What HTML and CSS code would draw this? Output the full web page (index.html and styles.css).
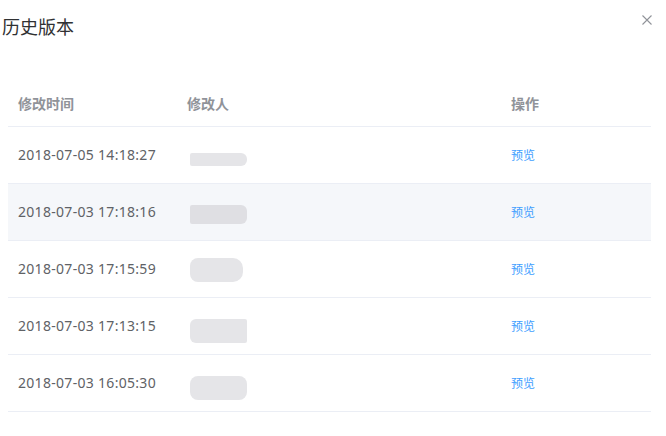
FILE: index.html
```html
<!DOCTYPE html>
<html lang="zh">
<head>
<meta charset="utf-8">
<link rel="stylesheet" href="styles.css">
</head>
<body>
<div class="dialog">
  <div class="dialog-header">
    <span class="title">历史版本</span>
    <span class="close" aria-label="关闭">
      <svg width="10" height="10" viewBox="0 0 10 10"><path d="M0.5 0.5 L9.5 9.5 M9.5 0.5 L0.5 9.5" stroke="#909399" stroke-width="1.1" fill="none"/></svg>
    </span>
  </div>
  <table class="table">
    <colgroup><col class="c1"><col class="c2"><col class="c3"></colgroup>
    <thead>
      <tr><th>修改时间</th><th>修改人</th><th>操作</th></tr>
    </thead>
    <tbody>
      <tr><td class="time">2018-07-05 14:18:27</td><td><span class="blur b1"></span></td><td><a class="link">预览</a></td></tr>
      <tr class="hover"><td class="time">2018-07-03 17:18:16</td><td><span class="blur b2"></span></td><td><a class="link">预览</a></td></tr>
      <tr><td class="time">2018-07-03 17:15:59</td><td><span class="blur b3"></span></td><td><a class="link">预览</a></td></tr>
      <tr><td class="time">2018-07-03 17:13:15</td><td><span class="blur b4"></span></td><td><a class="link">预览</a></td></tr>
      <tr><td class="time">2018-07-03 16:05:30</td><td><span class="blur b5"></span></td><td><a class="link">预览</a></td></tr>
    </tbody>
  </table>
</div>
</body>
</html>
```
FILE: styles.css
```css
html, body {
  margin: 0;
  padding: 0;
  background: #fff;
}
body {
  font-family: "Noto Sans", "Noto Sans CJK SC", sans-serif;
  color: #606266;
}
.dialog {
  width: 666px;
  padding-top: 14px;
}
.dialog-header {
  display: flex;
  justify-content: space-between;
  align-items: flex-start;
  padding-left: 2px;
  padding-right: 14px;
  height: 66px;
}
.title {
  font-family: "Noto Sans CJK SC", sans-serif;
  font-size: 18px;
  line-height: 24px;
  color: #303133;
}
.close {
  display: block;
  width: 10px;
  height: 10px;
  margin-top: 1px;
}
.close svg { display: block; }
.table {
  margin-left: 8px;
  width: 643px;
  border-collapse: collapse;
  table-layout: fixed;
}
.c1 { width: 169px; }
.c2 { width: 324px; }
.c3 { width: 150px; }
th {
  font-family: "Noto Sans CJK SC", sans-serif;
  font-size: 14px;
  font-weight: bold;
  color: #909399;
  text-align: left;
  height: 46px;
  padding: 0 10px;
  border-bottom: 1px solid #ebeef5;
  vertical-align: middle;
}
td {
  height: 54px;
  padding: 0 10px 2px;
  border-bottom: 1px solid #ebeef5;
  vertical-align: middle;
  font-size: 14px;
}
tr.hover td { background: #f5f7fa; }
.time {
  color: #606266;
  font-size: 14px;
  letter-spacing: 0.3px;
}
.link {
  font-family: "Noto Sans CJK SC", sans-serif;
  font-size: 12px;
  color: #409eff;
  cursor: pointer;
}
.blur {
  display: block;
  width: 57px;
  margin-left: 3px;
  background: #e5e5e8;
  border-radius: 2px 6px 6px 2px;
  filter: blur(0.7px);
}
.b1 { height: 13px; margin-top: 10px; }
.b2 { height: 19px; margin-top: 6px; background: #dfdfe3; }
.b3 { height: 24px; width: 53px; margin-top: 4px; border-radius: 8px 10px 10px 8px; }
.b4 { height: 24px; margin-top: 12px; border-radius: 6px 2px 2px 6px; }
.b5 { height: 24px; margin-top: 12px; border-radius: 8px; }
```
